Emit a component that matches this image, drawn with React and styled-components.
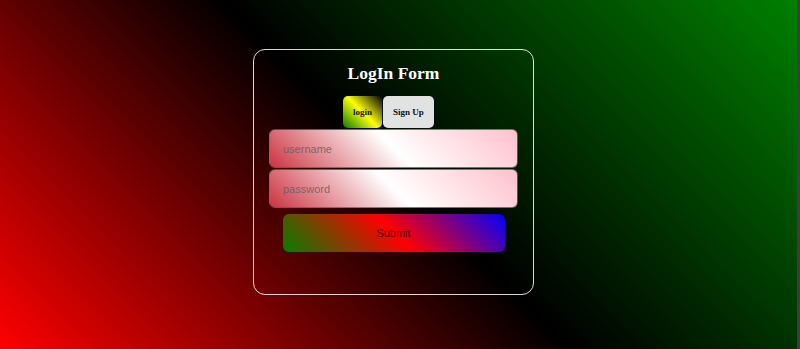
import React, { useState } from "react";
import styled, { createGlobalStyle } from "styled-components";

const GlobalStyle = createGlobalStyle`
	html {
		background: #3d3d3d;
	}
	body {
		margin: 0;
	}
	* {
		box-sizing: border-box;
	}
`;

const Page = styled.div`
		width: calc(100vw - 3px);
		min-height: 100vh;
		display: flex;
		align-items: center;
		justify-content: center;
		padding-right: 10px;
		padding-bottom: 5px;
		background: linear-gradient(45deg, red, black, green);
	`,
	Card = styled.form`
		width: 281px;
		height: 246px;
		border: 1px solid rgba(255, 255, 255, 0.85);
		border-radius: 12px;
		display: flex;
		flex-direction: column;
		align-items: center;
		padding: 0 15px;
	`,
	Title = styled.h2`
		margin: 12px 0 0;
		font-family: "Liberation Serif", "Times New Roman", serif;
		font-size: 17.5px;
		line-height: 22px;
		font-weight: 700;
		color: #fff;
	`,
	Tabs = styled.div`
		display: flex;
		gap: 1px;
		margin: 12px 10px 0 0;
	`,
	Tab = styled.button`
		height: 32px;
		padding: 0 10px;
		border: none;
		border-radius: 5px;
		font-family: "Liberation Serif", "Times New Roman", serif;
		font-size: 9px;
		font-weight: 700;
		color: #111;
		cursor: pointer;
		background: ${({ $active }) =>
			$active ? "linear-gradient(45deg, green, yellow, black)" : "#e1e3e3"};
	`,
	Field = styled.input`
		width: 100%;
		height: 39px;
		margin-top: 1px;
		padding: 0 13px;
		border: 1px solid rgba(70, 70, 70, 0.7);
		border-radius: 6px;
		outline: none;
		background: linear-gradient(45deg, #cc3340, white, pink);
		font-family: "Liberation Sans", Arial, sans-serif;
		font-size: 11px;
		color: #333;
		&::placeholder {
			color: rgba(100, 90, 90, 0.8);
		}
	`,
	Submit = styled.button`
		width: 222px;
		height: 38px;
		margin-top: 6px;
		border: none;
		border-radius: 6px;
		background: linear-gradient(45deg, green, red, blue);
		font-family: "Liberation Sans", Arial, sans-serif;
		font-size: 11px;
		color: rgba(0, 0, 0, 0.72);
		cursor: pointer;
	`;

const App = () => {
	const [tab, setTab] = useState("login");

	return (
		<>
			<GlobalStyle />
			<Page>
				<Card onSubmit={(e) => e.preventDefault()}>
					<Title>LogIn Form</Title>
					<Tabs>
						<Tab type="button" $active={tab === "login"} onClick={() => setTab("login")}>
							login
						</Tab>
						<Tab type="button" $active={tab === "signup"} onClick={() => setTab("signup")}>
							Sign Up
						</Tab>
					</Tabs>
					<Field type="text" placeholder="username" />
					<Field type="password" placeholder="password" />
					<Submit type="submit">Submit</Submit>
				</Card>
			</Page>
		</>
	);
};

export default App;
